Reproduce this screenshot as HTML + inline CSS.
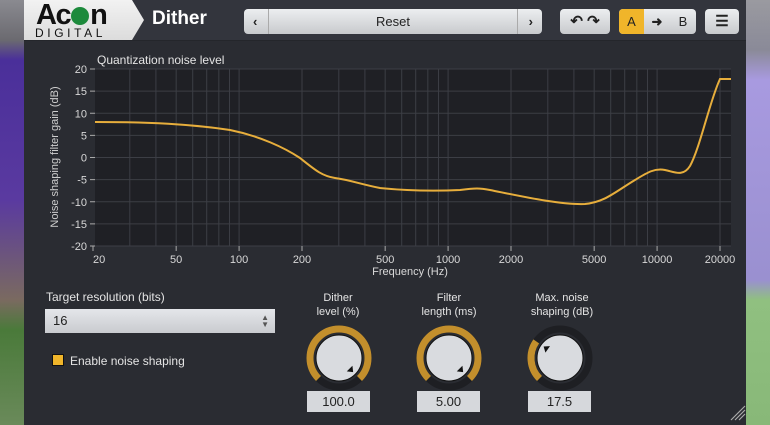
<!DOCTYPE html>
<html><head><meta charset="utf-8"><style>
*{margin:0;padding:0;box-sizing:border-box}
body{width:770px;height:425px;overflow:hidden;background:#6a6a78;font-family:"Liberation Sans",sans-serif;position:relative}
.lb{position:absolute;left:0;top:0;width:24px;height:425px;background:linear-gradient(#8a8a90 0,#6b6a70 40px,#4a2f9a 60px,#5a3aa0 200px,#7a6a60 300px,#4a7a3a 330px,#6a8a5a 425px)}
.rb{position:absolute;left:746px;top:0;width:24px;height:425px;background:linear-gradient(#9a9aa0 0,#8a8a98 50px,#a89ae0 80px,#9a90d0 280px,#90c080 300px,#88b878 425px)}
.panel{position:absolute;left:24px;top:0;width:722px;height:425px;background:#2a2c32}
.hdr{position:absolute;left:0;top:0;width:722px;height:41px;background:#33353d;border-bottom:1px solid #24262b}
.logo{position:absolute;left:0;top:0;width:120px;height:40px;background:linear-gradient(#f2f2f2,#dcdcdc);clip-path:polygon(0 0,108px 0,120px 20px,108px 40px,0 40px)}
.btn{position:absolute;top:9px;height:25px;background:linear-gradient(#eceef0,#c8cacd);border-radius:4px;color:#222;font-size:13px;text-align:center;line-height:25px}
.t{position:absolute;color:#e4e4e4;font-size:11px}
.vbox{position:absolute;top:391px;width:63px;height:21px;background:#d6d8dc;color:#222;font-size:13px;text-align:center;line-height:21px}
</style></head><body>
<div class="lb"></div><div class="rb"></div>
<div class="panel">
<div class="hdr">
 <div class="logo">
  <div style="position:absolute;left:12px;top:1px;font-size:29px;font-weight:bold;color:#111;letter-spacing:-1.5px;line-height:28px">Ac<span style="display:inline-block;width:18px;height:18px;border-radius:50%;background:#1d8a3c;vertical-align:-1px;margin:0 1px"></span>n</div>
  <div style="position:absolute;left:11px;top:26px;font-size:12px;color:#111;letter-spacing:3.6px">DIGITAL</div>
 </div>
 <div style="position:absolute;left:128px;top:8px;color:#fff;font-size:19px;font-weight:bold">Dither</div>
 <div class="btn" style="left:220px;width:298px"><span style="position:absolute;left:9px;font-weight:bold">&#8249;</span>Reset<span style="position:absolute;right:9px;font-weight:bold">&#8250;</span>
  <div style="position:absolute;left:24px;top:0;width:1px;height:25px;background:#aaa"></div><div style="position:absolute;right:24px;top:0;width:1px;height:25px;background:#aaa"></div></div>
 <div class="btn" style="left:536px;width:50px;font-weight:bold;font-size:15px">&#8630;&nbsp;&#8631;</div>
 <div class="btn" style="left:595px;width:77px;text-align:left">
  <span style="position:absolute;left:0;width:25px;height:25px;background:#f0b52a;border-radius:4px 0 0 4px;text-align:center">A</span>
  <span style="position:absolute;left:25px;width:26px;text-align:center;font-weight:bold">&#10140;</span>
  <span style="position:absolute;left:51px;width:26px;text-align:center">B</span></div>
 <div class="btn" style="left:681px;width:34px;font-size:15px;font-weight:bold">&#9776;</div>
</div>
<div class="t" style="left:73px;top:53px;font-size:12px">Quantization noise level</div>
<div class="t" style="left:22px;top:290px;font-size:12px">Target resolution (bits)</div>
<div style="position:absolute;left:21px;top:309px;width:230px;height:24px;background:linear-gradient(#e4e6ea,#c9cbcf);font-size:13px;line-height:24px;padding-left:8px;color:#222">16<span style="position:absolute;right:6px;top:0;font-size:8px;line-height:7px;padding-top:5px;color:#555">&#9650;<br>&#9660;</span></div>
<div style="position:absolute;left:28px;top:354px;width:12px;height:12px;background:#f0b52a;border:1px solid #111"></div>
<div class="t" style="left:46px;top:354px;font-size:12px">Enable noise shaping</div>
<div class="t" style="left:284px;top:291px;width:60px;text-align:center;line-height:14px">Dither<br>level (%)</div>
<div class="t" style="left:392px;top:291px;width:66px;text-align:center;line-height:14px">Filter<br>length (ms)</div>
<div class="t" style="left:498px;top:291px;width:80px;text-align:center;line-height:14px">Max. noise<br>shaping (dB)</div>
<div class="vbox" style="left:283px">100.0</div>
<div class="vbox" style="left:393px">5.00</div>
<div class="vbox" style="left:504px">17.5</div>
</div>
<svg width="770" height="425" style="position:absolute;left:0;top:0" id="s">
<rect x="95" y="69" width="636" height="177" fill="#1f2025"/>
<g id="grid" stroke="#3c3e45" stroke-width="1"></g>
<g id="lab" fill="#d8d8d8" font-size="11" font-family="Liberation Sans,sans-serif"></g>
<text x="58" y="157" fill="#cfcfcf" font-size="11" font-family="Liberation Sans,sans-serif" transform="rotate(-90 58 157)" text-anchor="middle">Noise shaping filter gain (dB)</text>
<text x="410" y="275" fill="#d8d8d8" font-size="11" font-family="Liberation Sans,sans-serif" text-anchor="middle">Frequency (Hz)</text>
<path d="M95,122 C150,122 190,124 230,130 C260,136 285,148 300,158 C315,170 322,176 335,178 C350,180 360,184 380,188 C410,191 440,191 460,190 C475,188 480,188 490,190 C520,196 560,205 585,204 C605,202 615,192 635,180 C648,172 655,168 665,170 C675,172 683,177 690,166 C700,148 710,100 720,79 L731,79" fill="none" stroke="#e7ae3c" stroke-width="2"/>
<g id="knobs"></g>
<path d="M735,420 L745,410 M739,420 L745,414 M731,420 L745,406" stroke="#aaa" stroke-width="1.2"/>
</svg>
<script>
var NS="http://www.w3.org/2000/svg",g=document.getElementById('grid'),lab=document.getElementById('lab');
function el(p,t,a,tx){var e=document.createElementNS(NS,t);for(var k in a)e.setAttribute(k,a[k]);if(tx!==undefined)e.textContent=String(tx);p.appendChild(e);return e}
function X(f){return 93+209*Math.log10(f/20)}
[20,30,40,50,60,70,80,90,100,200,300,400,500,600,700,800,900,1000,2000,3000,4000,5000,6000,7000,8000,9000,10000,20000].forEach(function(f){var x=X(f);if(x>95&&x<731)el(g,'line',{x1:x,x2:x,y1:69,y2:246})});
for(var d=20;d>=-20;d-=5){var y=157.5-d*4.425;el(g,'line',{x1:95,x2:731,y1:y,y2:y});el(g,'line',{x1:90,x2:95,y1:y,y2:y,stroke:'#aaa'});el(lab,'text',{x:87,y:y+4,'text-anchor':'end'},d)}
[20,50,100,200,500,1000,2000,5000,10000,20000].forEach(function(f){var x=X(f);el(g,'line',{x1:x,x2:x,y1:246,y2:251,stroke:'#aaa'});el(lab,'text',{x:f==20?93:x,y:263,'text-anchor':f==20?'start':'middle'},f)});
var k=document.getElementById('knobs');
function knob(cx,cy,end,ang){var r=29,s=225;function pt(a){var t=(a-90)*Math.PI/180;return[cx+r*Math.cos(t),cy+r*Math.sin(t)]}
el(k,'circle',{cx:cx,cy:cy,r:r,fill:'none',stroke:'#1e1f23','stroke-width':7});
var a=pt(s),b=pt(end),sw=(end-s+360)%360;el(k,'path',{d:'M'+a+' A'+r+','+r+' 0 '+(sw>180?1:0)+' 1 '+b,fill:'none',stroke:'#c38f2c','stroke-width':7});
el(k,'circle',{cx:cx,cy:cy,r:23,fill:'#d9dbdf',stroke:'#111','stroke-width':1});
var t=(ang-90)*Math.PI/180,px=cx+15*Math.cos(t),py=cy+15*Math.sin(t);
el(k,'polygon',{points:(px+5*Math.cos(t))+','+(py+5*Math.sin(t))+' '+(px-4*Math.sin(t))+','+(py+4*Math.cos(t))+' '+(px+4*Math.sin(t))+','+(py-4*Math.cos(t)),fill:'#111'})}
knob(339,358,135,135);knob(449,358,135,135);knob(560,358,305,305);
</script>
</body></html>
